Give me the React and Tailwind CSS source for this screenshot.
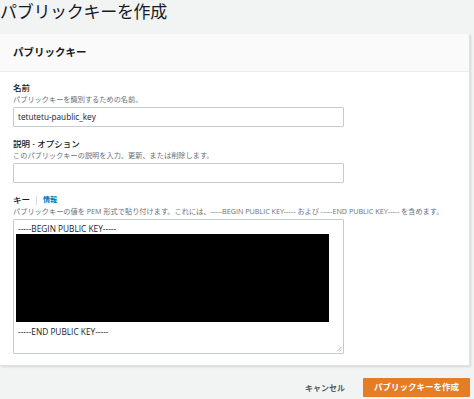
import React from 'react';

const FONT = { fontFamily: '"Open Sans", "Noto Sans CJK JP", sans-serif' };

const Field = ({ label, hint, children, info }) => (
  <div className="flex flex-col">
    <div className="flex items-center h-[11px] text-[8.5px] font-medium text-[#16191f]">
      <span>{label}</span>
      {info && (
        <>
          <span className="mx-[6px] h-[9px] w-px bg-[#d5dbdb]" />
          <span className="text-[7px] font-bold text-[#0073bb]">{info}</span>
        </>
      )}
    </div>
    <div className="h-[11px] text-[7.2px] leading-[11px] text-[#687078] whitespace-nowrap">{hint}</div>
    {children}
  </div>
);

const App = () => {
  return (
    <div className="w-[474px] h-[399px] bg-[#f2f3f3] overflow-hidden text-[#16191f]" style={FONT}>
      {/* Page title */}
      <div className="h-[34px] flex items-start">
        <h1 className="text-[17px] leading-[24px] font-normal tracking-[-0.3px] text-[#16191f]">パブリックキーを作成</h1>
      </div>

      {/* Card */}
      <div className="w-[470px] bg-white border-r border-b border-[#e0e2e2] shadow-[1px_1px_2px_rgba(0,0,0,0.12)]">
        <div className="h-[38px] bg-[#fafafa] border-b border-[#eaeded] px-[13px] flex items-center">
          <h2 className="text-[10.5px] font-bold">パブリックキー</h2>
        </div>

        <div className="px-[13px] pt-[11px] pb-[11px] flex flex-col gap-[12px]">
          <Field label="名前" hint="パブリックキーを識別するための名前。">
            <div className="mt-[2px] w-[331px] h-[20px] border border-[#c6cccc] rounded-[1px] flex items-center px-[4px] text-[8.2px] font-medium text-[#16191f]">
              tetutetu-paublic_key
            </div>
          </Field>

          <Field label="説明 - オプション" hint="このパブリックキーの説明を入力、更新、または削除します。">
            <div className="mt-[2px] w-[331px] h-[20px] border border-[#c6cccc] rounded-[1px]" />
          </Field>

          <Field
            label="キー"
            info="情報"
            hint="パブリックキーの値を PEM 形式で貼り付けます。これには、-----BEGIN PUBLIC KEY----- および -----END PUBLIC KEY----- を含めます。"
          >
            <div className="relative mt-[2px] w-[331px] h-[135px] border border-[#c6cccc] rounded-[1px] flex flex-col px-[2px] pt-[2.5px] text-[8.3px] font-medium leading-[11px] text-[#16191f]">
              <div className="pl-[2px]">-----BEGIN PUBLIC KEY-----</div>
              <div className="mt-[0.5px] w-[313px] h-[88px] bg-black" />
              <div className="pl-[2px] mt-[3.5px]">-----END PUBLIC KEY-----</div>
              <svg className="absolute right-[1px] bottom-[1px]" width="6" height="6" viewBox="0 0 6 6">
                <path d="M5.5 1 L1 5.5 M5.5 3.5 L3.5 5.5" stroke="#9aa0a0" strokeWidth="0.7" />
              </svg>
            </div>
          </Field>
        </div>
      </div>

      {/* Footer */}
      <div className="w-[470px] flex items-center justify-end gap-[18px] mt-[12px]">
        <button className="text-[8px] font-bold text-[#545b64]">キャンセル</button>
        <button className="h-[19px] w-[107px] bg-[#e57d25] text-white text-[8.5px] font-bold rounded-[1px] flex items-center justify-center">
          パブリックキーを作成
        </button>
      </div>
    </div>
  );
};

export default App;
